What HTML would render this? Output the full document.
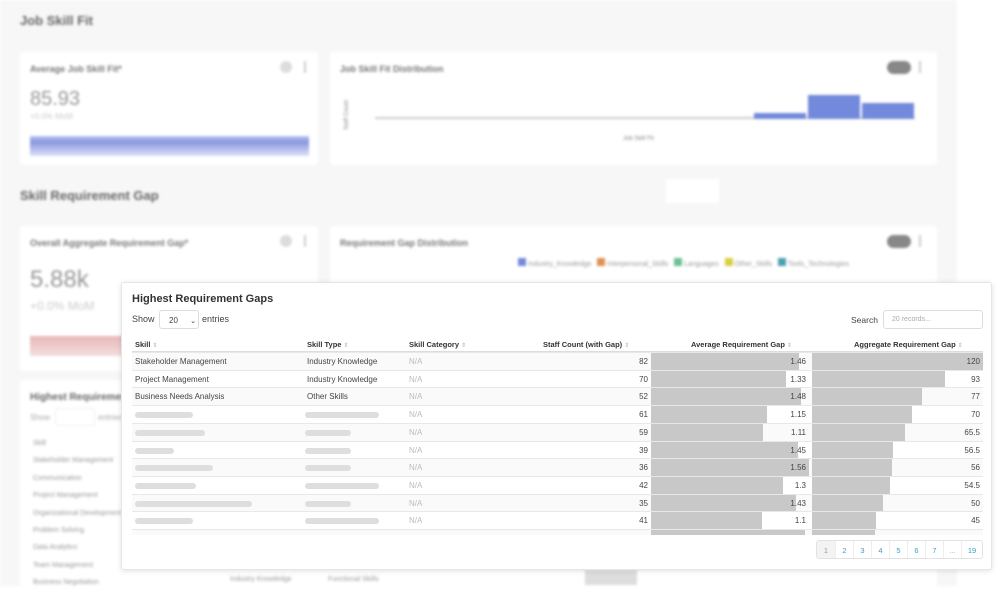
<!DOCTYPE html>
<html><head><meta charset="utf-8"><style>
*{box-sizing:border-box;margin:0;padding:0}
body{width:1000px;height:611px;overflow:hidden;background:#fff;font-family:"Liberation Sans",sans-serif;position:relative}
#bg{position:absolute;left:0;top:0;width:957px;height:586px;background:#f7f7f7;filter:blur(1.3px);overflow:hidden}
.a{position:absolute}
.card{position:absolute;background:#fff;border-radius:4px}
.h{font-weight:bold;color:#555}
.g{color:#aaa}
#m{position:absolute;left:121px;top:282px;width:871px;height:288px;background:#fff;border:1px solid #e6e6e6;border-radius:3px;box-shadow:0 1px 6px rgba(0,0,0,.12);font-size:8px;color:#444}
.t{position:absolute;white-space:nowrap}
.row{position:absolute;left:10px;width:851px;height:18px;border-top:1px solid #e8e8e8}
.row.odd{background:#fafafa}
.ph{position:absolute;top:6px;height:6px;border-radius:3px;background:#dcdedf}
.bar{position:absolute;top:0;height:17px;background:#c8c8c8}
.num{position:absolute;top:4px;text-align:right}
.s{color:#ccc;font-size:6px}
</style></head><body>
<div id="bg">
 <div class="a h" style="left:20px;top:13px;font-size:13px;color:#666">Job Skill Fit</div>
 <div class="card" style="left:20px;top:52px;width:298px;height:113px">
  <div class="a h" style="left:10px;top:12px;font-size:9px;color:#777">Average Job Skill Fit*</div>
  <div class="a" style="left:260px;top:9px;width:12px;height:12px;border-radius:50%;background:#ddd"></div>
  <div class="a" style="left:284px;top:9px;width:2px;height:12px;background:#ccc"></div>
  <div class="a" style="left:10px;top:36px;font-size:20px;color:#999">85.93</div>
  <div class="a" style="left:10px;top:60px;font-size:8px;color:#ccc">+0.0% MoM</div>
  <div class="a" style="left:10px;top:84px;width:279px;height:20px;background:linear-gradient(#bcc6f0,#8896e0 30%,#dde2f8)"></div>
 </div>
 <div class="card" style="left:330px;top:52px;width:607px;height:113px">
  <div class="a h" style="left:10px;top:12px;font-size:9px;color:#777">Job Skill Fit Distribution</div>
  <div class="a" style="left:557px;top:9px;width:24px;height:13px;border-radius:7px;background:#888"></div>
  <div class="a" style="left:589px;top:9px;width:2px;height:12px;background:#ccc"></div>
  <div class="a" style="left:14px;top:30px;font-size:6px;color:#888;transform:rotate(-90deg);transform-origin:left top;top:78px">Staff Count</div>
  <div class="a" style="left:45px;top:65px;width:540px;height:2px;background:#ccc"></div>
  <div class="a" style="left:424px;top:61px;width:52px;height:6px;background:#7289dc"></div>
  <div class="a" style="left:478px;top:43px;width:52px;height:24px;background:#7289dc"></div>
  <div class="a" style="left:532px;top:51px;width:52px;height:16px;background:#7289dc"></div>
  <div class="a" style="left:293px;top:84px;font-size:6px;color:#888">Job Skill Fit</div>
 </div>
 <div class="a h" style="left:20px;top:188px;font-size:13px;color:#666">Skill Requirement Gap</div>
 <div class="a" style="left:666px;top:179px;width:53px;height:24px;background:#fff"></div>
 <div class="card" style="left:20px;top:226px;width:298px;height:145px">
  <div class="a h" style="left:10px;top:12px;font-size:9px;color:#777">Overall Aggregate Requirement Gap*</div>
  <div class="a" style="left:260px;top:9px;width:12px;height:12px;border-radius:50%;background:#ddd"></div>
  <div class="a" style="left:284px;top:9px;width:2px;height:12px;background:#ccc"></div>
  <div class="a" style="left:10px;top:40px;font-size:24px;color:#999">5.88k</div>
  <div class="a" style="left:10px;top:73px;font-size:12px;color:#ccc">+0.0% MoM</div>
  <div class="a" style="left:10px;top:110px;width:279px;height:20px;background:linear-gradient(#e8b8b8,#f3dede)"></div>
 </div>
 <div class="card" style="left:330px;top:226px;width:607px;height:60px">
  <div class="a h" style="left:10px;top:12px;font-size:9px;color:#777">Requirement Gap Distribution</div>
  <div class="a" style="left:557px;top:9px;width:24px;height:13px;border-radius:7px;background:#888"></div>
  <div class="a" style="left:589px;top:9px;width:2px;height:12px;background:#ccc"></div>
  <div class="a" style="left:188px;top:32px;font-size:7px;color:#999;white-space:nowrap"><span style="display:inline-block;width:8px;height:8px;background:#7289dc"></span> Industry_Knowledge &nbsp; <span style="display:inline-block;width:8px;height:8px;background:#e09050"></span> Interpersonal_Skills &nbsp; <span style="display:inline-block;width:8px;height:8px;background:#6cc090"></span> Languages &nbsp; <span style="display:inline-block;width:8px;height:8px;background:#d8d040"></span> Other_Skills &nbsp; <span style="display:inline-block;width:8px;height:8px;background:#4aa0b0"></span> Tools_Technologies</div>
 </div>
 <div class="card" style="left:20px;top:380px;width:917px;height:220px">
  <div class="a h" style="left:10px;top:12px;font-size:10px;color:#666">Highest Requirement Gaps</div>
  <div class="a" style="left:10px;top:33px;font-size:8px;color:#aaa">Show</div>
  <div class="a" style="left:35px;top:28px;width:40px;height:18px;border:1px solid #eee;border-radius:3px"></div>
  <div class="a" style="left:78px;top:33px;font-size:8px;color:#aaa">entries</div>
  <div class="a" style="left:13px;top:55px;font-size:7px;color:#999;line-height:17.4px">Skill<br>Stakeholder Management<br>Communication<br>Project Management<br>Organizational Development<br>Problem Solving<br>Data Analytics<br>Team Management<br>Business Negotiation</div>
  <div class="a" style="left:210px;top:196px;font-size:7px;color:#999">Industry Knowledge</div>
  <div class="a" style="left:308px;top:196px;font-size:7px;color:#999">Functional Skills</div>
  <div class="a" style="left:565px;top:190px;width:52px;height:15px;background:#ddd"></div>
 </div>
</div>

<div id="m">
 <div class="t" style="left:10px;top:10px;font-size:11px;font-weight:bold;color:#333">Highest Requirement Gaps</div>
 <div class="t" style="left:10px;top:31px;font-size:9px">Show</div>
 <div class="a" style="left:37px;top:27px;width:40px;height:19px;border:1px solid #ddd;border-radius:3px;font-size:8px;padding:5px 0 0 9px">20 <span style="margin-left:10px;font-size:7px">⌄</span></div>
 <div class="t" style="left:80px;top:31px;font-size:9px">entries</div>
 <div class="t" style="left:729px;top:32px;font-size:8.5px">Search</div>
 <div class="a" style="left:761px;top:27px;width:100px;height:19px;border:1px solid #ddd;border-radius:3px;font-size:7px;color:#aaa;padding:5px 0 0 8px">20 records...</div>
 <div class="t" style="left:13px;top:57px;font-weight:bold;font-size:7.5px;color:#333">Skill <span class="s">⇕</span></div>
 <div class="t" style="left:185px;top:57px;font-weight:bold;font-size:7.5px;color:#333">Skill Type <span class="s">⇕</span></div>
 <div class="t" style="left:287px;top:57px;font-weight:bold;font-size:7.5px;color:#333">Skill Category <span class="s">⇕</span></div>
 <div class="t" style="left:421px;top:57px;font-weight:bold;font-size:7.5px;color:#333">Staff Count (with Gap) <span class="s">⇕</span></div>
 <div class="t" style="left:569px;top:57px;font-weight:bold;font-size:7.5px;color:#333">Average Requirement Gap <span class="s">⇕</span></div>
 <div class="t" style="left:732px;top:57px;font-weight:bold;font-size:7.5px;color:#333">Aggregate Requirement Gap <span class="s">⇕</span></div>
 <div class="a" style="left:10px;top:68px;width:851px;height:1px;background:#ddd"></div>
 <div class="a" style="left:0;top:69px;width:871px;height:183px;overflow:hidden" id="tb"></div>
 <div class="a" style="left:694px;top:257px;width:167px;height:19px;border:1px solid #e2e2e2;border-radius:3px;font-size:7.5px;color:#3aa0c0;display:flex">
  <span style="width:18px;background:#f3f3f3;color:#999;text-align:center;padding-top:5px">1</span>
  <span style="width:18px;text-align:center;padding-top:5px;border-left:1px solid #eee">2</span>
  <span style="width:18px;text-align:center;padding-top:5px;border-left:1px solid #eee">3</span>
  <span style="width:18px;text-align:center;padding-top:5px;border-left:1px solid #eee">4</span>
  <span style="width:18px;text-align:center;padding-top:5px;border-left:1px solid #eee">5</span>
  <span style="width:18px;text-align:center;padding-top:5px;border-left:1px solid #eee">6</span>
  <span style="width:18px;text-align:center;padding-top:5px;border-left:1px solid #eee">7</span>
  <span style="width:18px;text-align:center;padding-top:5px;border-left:1px solid #eee;color:#aaa">...</span>
  <span style="flex:1;text-align:center;padding-top:5px;border-left:1px solid #eee">19</span>
 </div>
</div>
<script>
var d=[["Stakeholder Management","Industry Knowledge",82,1.46,120],["Project Management","Industry Knowledge",70,1.33,93],["Business Needs Analysis","Other Skills",52,1.48,77],[58,74,61,1.15,70],[70,46,59,1.11,65.5],[39,46,39,1.45,56.5],[78,46,36,1.56,56],[61,74,42,1.3,54.5],[117,46,35,1.43,50],[58,74,41,1.1,45],[96,74,38,1.52,44]];
var h="";
d.forEach(function(r,i){
 var top=i*17.7;
 h+='<div class="row'+(i%2==0?' odd':'')+'" style="top:'+top+'px">';
 if(typeof r[0]=="string"){
  h+='<div class="t" style="left:3px;top:4px">'+r[0]+'</div><div class="t" style="left:175px;top:4px">'+r[1]+'</div>';
 } else {
  h+='<div class="ph" style="left:3px;width:'+r[0]+'px"></div><div class="ph" style="left:173px;width:'+r[1]+'px"></div>';
 }
 h+='<div class="t" style="left:277px;top:4px;color:#bbb">N/A</div>';
 h+='<div class="num" style="left:440px;width:76px">'+r[2]+'</div>';
 var w1=Math.round(r[3]/1.56*158), w2=Math.round(r[4]/120*171);
 h+='<div class="bar" style="left:519px;width:'+w1+'px"></div><div class="num" style="left:519px;width:155px">'+r[3]+'</div>';
 h+='<div class="bar" style="left:680px;width:'+w2+'px"></div><div class="num" style="left:680px;width:168px">'+r[4]+'</div>';
 h+='</div>';
});
document.getElementById("tb").innerHTML=h;
</script>
</body></html>
